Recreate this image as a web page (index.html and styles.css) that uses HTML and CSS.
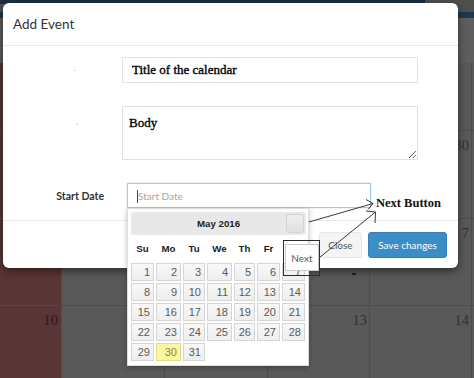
FILE: index.html
```html
<!DOCTYPE html>
<html>
<head>
<meta charset="utf-8">
<title>Add Event</title>
<link rel="stylesheet" href="styles.css">
</head>
<body>
<div class="page">
  <div class="top"><div class="top-strip"></div></div>
  <div class="navband"></div>
  <div class="cal-head"></div>
  <div class="cal">
    <div class="day red"></div><div class="day"></div><div class="day"></div><div class="day"></div><div class="day"></div><div class="day"></div>
    <div class="day red"></div><div class="day"></div><div class="day"></div><div class="day"></div><div class="day">30</div><div class="day"></div>
    <div class="day red"></div><div class="day"></div><div class="day"></div><div class="day"><span class="ev"></span></div><div class="day">7</div><div class="day"></div>
    <div class="day red">10</div><div class="day"></div><div class="day"></div><div class="day">13</div><div class="day">14</div><div class="day"></div>
  </div>
</div>

<div class="modal">
  <div class="modal-header">Add Event</div>
  <div class="modal-body">
    <div class="row row-title">
      <label class="lbl lbl-dot">.</label>
      <input class="field field-title" type="text" value="Title of the calendar">
    </div>
    <div class="row row-body">
      <label class="lbl lbl-dot lbl-top">.</label>
      <textarea class="field field-body">Body</textarea>
    </div>
    <div class="row row-date">
      <label class="lbl lbl-date">Start Date</label>
      <input class="field field-date" type="text" placeholder="Start Date">
    </div>
  </div>
  <div class="modal-footer">
    <button class="btn btn-close">Close</button>
    <button class="btn btn-save">Save changes</button>
  </div>
</div>

<div class="datepicker">
  <div class="dp-head">May 2016<span class="dp-next"></span></div>
  <div class="dp-grid dp-dow">
    <span>Su</span><span>Mo</span><span>Tu</span><span>We</span><span>Th</span><span>Fr</span><span></span>
  </div>
  <div class="dp-grid dp-days">
    <span class="c">1</span><span class="c">2</span><span class="c">3</span><span class="c">4</span><span class="c">5</span><span class="c">6</span><span class="c">7</span>
    <span class="c">8</span><span class="c">9</span><span class="c">10</span><span class="c">11</span><span class="c">12</span><span class="c">13</span><span class="c">14</span>
    <span class="c">15</span><span class="c">16</span><span class="c">17</span><span class="c">18</span><span class="c">19</span><span class="c">20</span><span class="c">21</span>
    <span class="c">22</span><span class="c">23</span><span class="c">24</span><span class="c">25</span><span class="c">26</span><span class="c">27</span><span class="c">28</span>
    <span class="c">29</span><span class="c today">30</span><span class="c">31</span>
  </div>
</div>

<div class="callout"><div class="callout-inner">Next</div></div>

<svg class="arrows" width="474" height="378" viewBox="0 0 474 378">
  <g fill="none" stroke="#3a3a3a" stroke-width="1">
    <line x1="309" y1="222" x2="373" y2="203.5"/>
    <polyline points="366,199.5 373,203.5 368,209.5"/>
    <line x1="319" y1="258" x2="375.5" y2="212"/>
    <polyline points="366,211 375.5,212 375,223"/>
  </g>
</svg>
<div class="note">Next Button</div>
</body>
</html>
```

FILE: styles.css
```css
* { box-sizing: border-box; }
html, body { margin: 0; padding: 0; }
body {
  width: 474px;
  height: 378px;
  overflow: hidden;
  position: relative;
  background: #585858;
  font-family: Lato, "Liberation Sans", sans-serif;
}

/* underlying calendar page (dimmed) */
.page { height: 378px; display: flex; flex-direction: column; }
.top { height: 12px; background: #4f4f4f; }
.top-strip { width: 425px; height: 4px; background: #1c2f40; }
.navband { height: 6px; background: #1d3850; }
.cal-head { height: 45px; background: #5e5e5e; }
.cal {
  flex: 1;
  display: grid;
  grid-template-columns: 61px 102px 102px 101px 101px 1fr;
  grid-template-rows: 67px 87px 86px 1fr;
  gap: 1px;
  background: #4c4c4c;
}
.day {
  position: relative;
  background: #595959;
  text-align: right;
  padding: 7px 2px 0 0;
  font-family: "Liberation Serif", serif;
  font-size: 14.5px;
  line-height: 15px;
  color: #303030;
}
.day.red { background: #5a3535; color: #2a1818; padding-right: 3px; }
.ev { position: absolute; left: 84px; top: 54px; width: 4px; height: 2px; background: #1e1e1e; }

/* modal */
.modal {
  position: absolute;
  left: 3px; top: 3px;
  width: 455px; height: 265px;
  background: #fff;
  border-radius: 6px;
  box-shadow: 0 3px 9px rgba(0,0,0,.5);
  display: flex; flex-direction: column;
}
.modal-header {
  height: 43px;
  border-bottom: 1px solid #e8e8e8;
  padding: 0 10px;
  display: flex; align-items: center;
  font-size: 13.5px; color: #333;
}
.modal-body {
  height: 174px;
  padding: 11px 0 12px;
  display: flex; flex-direction: column; gap: 23px;
}
.row { display: flex; align-items: center; }
.row-body { align-items: flex-start; }
.lbl { text-align: right; color: #333; }
.lbl-dot { width: 119px; padding-right: 46px; font-size: 10px; color: #b5b5b5; line-height: 10px; margin-top: -6px; }
.lbl-top { margin-top: 10px; padding-right: 44px; }
.lbl-date { width: 124px; padding-right: 23px; font-size: 10.5px; font-weight: bold; }

.field {
  display: block;
  margin: 0;
  border: 1px solid #e1e1e1;
  background: #fff;
  font-family: "Liberation Serif", serif;
  font-size: 13px;
  font-weight: normal;
  color: #000;
  -webkit-text-stroke: 0.35px #000;
  outline: none;
}
.field-title { width: 296px; height: 26px; padding: 0 9px; }
.field-body { width: 296px; height: 54px; padding: 8px 6px; resize: both; line-height: 15px; }
.field-date {
  width: 244px; height: 25px;
  padding: 0 9px 0 10px;
  border-color: #9fcbe4;
  box-shadow: 0 0 2px rgba(102,175,233,.35);
  font-family: Lato, "Liberation Sans", sans-serif;
  font-size: 10px; color: #555;
  -webkit-text-stroke: 0;
  background: #fff linear-gradient(#444, #444) no-repeat 9px 6px / 1px 13px;
}
.field-date::placeholder { color: #a5a5a5; }

.modal-footer {
  flex: 1;
  border-top: 1px solid #e8e8e8;
  display: flex; justify-content: flex-end; align-items: center;
  gap: 6px;
  padding-right: 11px;
}
.btn {
  height: 26px; margin: 0; padding: 0;
  border-radius: 3px;
  font-family: Lato, "Liberation Sans", sans-serif;
  font-size: 10px;
}
.btn-close { width: 43px; background: #f4f4f4; border: 1px solid #e6e6e6; color: #555; }
.btn-save { width: 79px; background: #3c8cc5; border: 1px solid #3680b6; color: #fff; }

/* datepicker dropdown */
.datepicker {
  position: absolute;
  left: 127px; top: 208px;
  width: 182px; height: 158px;
  background: #fff;
  border: 1px solid #dcdcdc;
  box-shadow: 0 2px 5px rgba(0,0,0,.25);
  padding: 3px 2px 4px 3px;
  font-family: "Liberation Sans", Arial, sans-serif;
}
.dp-head {
  position: relative;
  height: 23px;
  background: #e8e8e8;
  border-radius: 3px;
  text-align: center;
  line-height: 23px;
  font-size: 9.7px; font-weight: bold; color: #222;
}
.dp-next {
  position: absolute; right: 2px; top: 2px;
  width: 18px; height: 19px;
  border: 1px solid #d2d2d2; border-radius: 3px;
  background: linear-gradient(#efefef, #e0e0e0);
}
.dp-grid {
  display: grid;
  grid-template-columns: 23px 25px 22px 25px 21px 23px 23px;
  column-gap: 2px;
}
.dp-dow { height: 26px; align-items: center; text-align: center; font-size: 9.7px; font-weight: bold; color: #222; }
.dp-days { margin-top: 2px; grid-auto-rows: 18px; row-gap: 2px; }
.c {
  border: 1px solid #d5d5d5;
  background: linear-gradient(#f8f8f8, #eeeeee);
  text-align: right;
  padding-right: 3px;
  font-size: 11px;
  line-height: 16px;
  color: #5a5a5a;
}
.c.today { background: #fcf69c; border-color: #e3da8a; color: #8a8758; }

/* annotations */
.callout {
  position: absolute;
  left: 283px; top: 240px;
  width: 37px; height: 36px;
  border: 1px solid #2c2c2c;
  padding: 3px 0 4px 1px;
  display: flex;
}
.callout-inner {
  flex: 1;
  background: #fff;
  border: 1px solid #c9c9c9;
  display: flex; align-items: center; justify-content: center;
  font-size: 10px; color: #555;
  padding-top: 1px;
}
.arrows { position: absolute; left: 0; top: 0; pointer-events: none; }
.note {
  position: absolute;
  left: 376px; top: 196px;
  font-family: "Liberation Serif", serif;
  font-weight: bold; font-size: 12.5px; line-height: 14px;
  color: #111;
}
```
